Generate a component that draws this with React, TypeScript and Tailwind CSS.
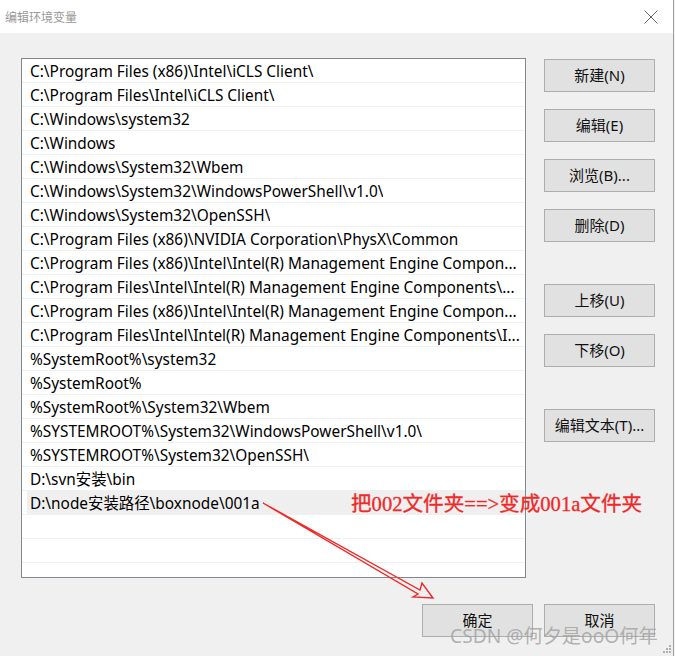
import React from "react";

const items = [
  "C:\\Program Files (x86)\\Intel\\iCLS Client\\",
  "C:\\Program Files\\Intel\\iCLS Client\\",
  "C:\\Windows\\system32",
  "C:\\Windows",
  "C:\\Windows\\System32\\Wbem",
  "C:\\Windows\\System32\\WindowsPowerShell\\v1.0\\",
  "C:\\Windows\\System32\\OpenSSH\\",
  "C:\\Program Files (x86)\\NVIDIA Corporation\\PhysX\\Common",
  "C:\\Program Files (x86)\\Intel\\Intel(R) Management Engine Compon...",
  "C:\\Program Files\\Intel\\Intel(R) Management Engine Components\\...",
  "C:\\Program Files (x86)\\Intel\\Intel(R) Management Engine Compon...",
  "C:\\Program Files\\Intel\\Intel(R) Management Engine Components\\I...",
  "%SystemRoot%\\system32",
  "%SystemRoot%",
  "%SystemRoot%\\System32\\Wbem",
  "%SYSTEMROOT%\\System32\\WindowsPowerShell\\v1.0\\",
  "%SYSTEMROOT%\\System32\\OpenSSH\\",
  "D:\\svn安装\\bin",
  "D:\\node安装路径\\boxnode\\001a",
];

const ui = { fontFamily: '"Noto Sans", "Noto Sans CJK SC", sans-serif' };

function Btn({ label, className = "" }: { label: string; className?: string }) {
  return (
    <div
      className={
        "w-[111px] h-[33px] bg-[#e1e1e1] border border-[#adadad] flex items-center justify-center text-[15px] text-[#111] " +
        className
      }
    >
      {label}
    </div>
  );
}

export default function App() {
  return (
    <div className="relative w-[675px] h-[656px] flex overflow-hidden" style={ui}>
      <div className="w-[673px] flex flex-col">
        <div className="h-[33px] bg-white flex items-center justify-between pl-[5px] pr-[15px]">
          <span className="text-[12px] text-[#999] leading-none" style={{ fontFamily: '"Noto Sans CJK SC", sans-serif' }}>
            编辑环境变量
          </span>
          <svg width="14" height="14" viewBox="0 0 14 14">
            <path d="M0.5 0.5 L13.5 13.5 M13.5 0.5 L0.5 13.5" stroke="#666" strokeWidth="1" />
          </svg>
        </div>
        <div className="flex-1 bg-[#f0f0f0] flex flex-col">
          <div className="flex pt-[25px]">
            <div className="ml-[21px] w-[505px] h-[520px] border border-[#828790] bg-white overflow-hidden">
              {items.map((t, i) => (
                <div key={i} className="h-[24px] border-b border-[#f0f0f0] flex">
                  <div
                    className={
                      "flex-1 flex items-center pl-[3px] pr-[2px] text-[15.4px] text-[#000] min-w-0 ml-[5px] pt-[3px] " +
                      (i === items.length - 1 ? "bg-[#efefef]" : "")
                    }
                  >
                    <span className="overflow-hidden whitespace-nowrap">{t}</span>
                  </div>
                </div>
              ))}
              <div className="h-[24px] border-b border-[#f0f0f0]" />
              <div className="h-[24px] border-b border-[#f0f0f0]" />
            </div>
            <div className="ml-[18px] pt-[1px] flex flex-col">
              <Btn label="新建(N)" />
              <Btn label="编辑(E)" className="mt-[17px]" />
              <Btn label="浏览(B)..." className="mt-[17px]" />
              <Btn label="删除(D)" className="mt-[17px]" />
              <Btn label="上移(U)" className="mt-[42px]" />
              <Btn label="下移(O)" className="mt-[17px]" />
              <Btn label="编辑文本(T)..." className="mt-[42px]" />
            </div>
          </div>
          <div className="flex mt-[26px] pl-[422px] gap-[11px]">
            <Btn label="确定" />
            <Btn label="取消" />
          </div>
        </div>
      </div>
      <div className="w-[2px] border-l border-[#a0a0a0] bg-[#f0f0f0]" />

      {/* annotation text */}
      <div
        className="absolute left-[351px] top-[490px] text-[20.6px] leading-[28px] text-[#f02828] whitespace-nowrap"
        style={{ fontFamily: '"Liberation Serif", "Noto Sans CJK SC", serif', WebkitTextStroke: "0.3px #f02828" }}
      >
        把002文件夹==&gt;变成001a文件夹
      </div>

      {/* arrow */}
      <svg className="absolute left-0 top-0 pointer-events-none" width="675" height="656">
        <polygon
          points="263,503 420,590 422,583 433,598 413,597 418,594"
          fill="none"
          stroke="#f02828"
          strokeWidth="1.4"
          strokeLinejoin="miter"
        />
      </svg>

      {/* watermark */}
      <div
        className="absolute left-[450px] top-[623px] text-[19.2px] leading-[26px] text-[#a0a0a0]/80 whitespace-nowrap"
        style={{ fontFamily: '"Noto Sans", "Noto Sans CJK SC", sans-serif' }}
      >
        CSDN @何夕是ooO何年
      </div>

      {/* resize grip */}
      <svg className="absolute left-[662px] top-[644px]" width="10" height="10" viewBox="0 0 10 10">
        <rect x="7" y="1" width="2" height="2" fill="#b0b0b0" />
        <rect x="4" y="4" width="2" height="2" fill="#b0b0b0" />
        <rect x="7" y="4" width="2" height="2" fill="#b0b0b0" />
        <rect x="1" y="7" width="2" height="2" fill="#b0b0b0" />
        <rect x="4" y="7" width="2" height="2" fill="#b0b0b0" />
        <rect x="7" y="7" width="2" height="2" fill="#b0b0b0" />
      </svg>
    </div>
  );
}
